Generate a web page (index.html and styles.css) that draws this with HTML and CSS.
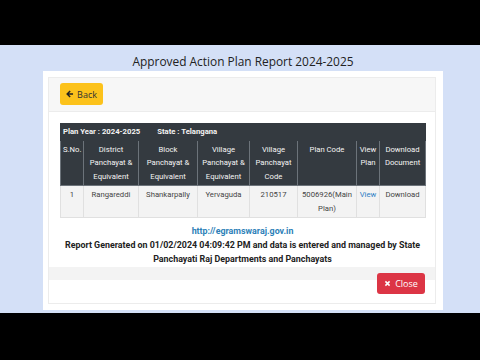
FILE: index.html
```html
<!DOCTYPE html>
<html>
<head>
<meta charset="utf-8">
<link rel="stylesheet" href="styles.css">
</head>
<body>
<div class="bar-top"></div>
<main class="stage">
  <h1 class="title">Approved Action Plan Report 2024-2025</h1>
  <div class="sheet">
    <div class="panel">
      <div class="panel-head">
        <button class="btn btn-back"><svg class="ico" viewBox="0 0 10 10" width="8" height="8"><path d="M5.2 1.3 1.5 5l3.7 3.7M1.8 5h7" fill="none" stroke="#222" stroke-width="1.9"/></svg>Back</button>
      </div>
      <div class="panel-body">
        <table class="grid">
          <colgroup>
            <col style="width:23px"><col style="width:55px"><col style="width:59px"><col style="width:52px"><col style="width:48px"><col style="width:59px"><col style="width:23px"><col style="width:46px">
          </colgroup>
          <thead>
            <tr class="cap"><th colspan="8">Plan Year : 2024-2025<span class="state">State : Telangana</span></th></tr>
            <tr class="cols">
              <th>S.No.</th>
              <th>District Panchayat &amp; Equivalent</th>
              <th>Block Panchayat &amp; Equivalent</th>
              <th>Village Panchayat &amp; Equivalent</th>
              <th>Village Panchayat Code</th>
              <th>Plan Code</th>
              <th>View Plan</th>
              <th>Download Document</th>
            </tr>
          </thead>
          <tbody>
            <tr>
              <td>1</td>
              <td>Rangareddi</td>
              <td>Shankarpally</td>
              <td>Yervaguda</td>
              <td>210517</td>
              <td>5006926(Main Plan)</td>
              <td><a class="lnk">View</a></td>
              <td>Download</td>
            </tr>
          </tbody>
        </table>
        <div class="note">
          <a class="site">http://egramswaraj.gov.in</a>
          <p class="gen">Report Generated on 01/02/2024 04:09:42 PM and data is entered and managed by State Panchayati Raj Departments and Panchayats</p>
        </div>
      </div>
      <div class="panel-foot">
        <button class="btn btn-close"><svg class="ico" viewBox="0 0 10 10" width="7" height="7"><path d="M2 2l6 6M8 2 2 8" fill="none" stroke="#fff" stroke-width="2.2"/></svg>Close</button>
      </div>
    </div>
  </div>
</main>
<div class="bar-bottom"></div>
</body>
</html>
```
FILE: styles.css
```css
html, body {
  margin: 0;
  padding: 0;
  background: #000;
  width: 480px;
  height: 360px;
  overflow: hidden;
}
.bar-top { height: 45px; background: #000; }
.bar-bottom { height: 47px; background: #000; }
.stage {
  height: 268px;
  background: #d4e0f7;
  display: flex;
  flex-direction: column;
  align-items: flex-start;
  box-sizing: border-box;
  padding: 6px 0 0 43px;
}
.title {
  margin: 0;
  width: 400px;
  text-align: center;
  font-family: "Open Sans", sans-serif;
  font-weight: 400;
  font-size: 11.9px;
  line-height: 20px;
  color: #222;
}
.sheet {
  width: 400px;
  height: 239px;
  box-sizing: border-box;
  background: #fff;
  padding: 6px 7px 6px 5px;
}
.panel {
  height: 100%;
  box-sizing: border-box;
  border: 1px solid #ececec;
  display: flex;
  flex-direction: column;
}
.panel-head {
  height: 34px;
  background: #f7f7f7;
  border-bottom: 1px solid #ececec;
  padding: 5px 0 0 11px;
  box-sizing: border-box;
}
.btn {
  border: 0;
  border-radius: 3px;
  display: inline-flex;
  align-items: center;
  gap: 3px;
  font-family: "Open Sans", sans-serif;
  font-size: 9px;
  padding: 0;
  cursor: pointer;
}
.btn-back {
  width: 43px;
  height: 22px;
  justify-content: center;
  background: #fcc21b;
  color: #333;
}
.btn-close {
  width: 48px;
  height: 21px;
  justify-content: center;
  background: #dc3545;
  color: #fff;
  gap: 4px;
}
.panel-body {
  padding: 11px 10px 0 11px;
  flex: 1;
}
.grid {
  width: 365px;
  table-layout: fixed;
  border-collapse: collapse;
  font-family: Roboto, sans-serif;
  font-size: 7.7px;
  line-height: 13.5px;
  color: #444;
}
.grid th {
  background: #343a40;
  color: #f4f4f4;
  font-weight: 400;
  border: 1px solid #6c737a;
  padding: 2px 2px;
  text-align: center;
  vertical-align: top;
}
.grid .cap th {
  text-align: left;
  font-weight: 700;
  padding: 1px 2px;
  border-color: #343a40;
}
.state { margin-left: 17px; }
.grid td {
  background: #f3f3f3;
  border: 1px solid #e0e0e0;
  padding: 2px 2px;
  text-align: center;
  vertical-align: top;
  height: 26px;
}
.lnk { color: #2f80c5; }
.note {
  text-align: center;
  font-family: Roboto, sans-serif;
  font-weight: 700;
  font-size: 8.9px;
  line-height: 14px;
  color: #222;
  padding-top: 6px;
}
.site { color: #2d7fb8; display: block; }
.gen { margin: 0; }
.panel-foot {
  height: 36px;
  box-sizing: border-box;
  background: linear-gradient(#f3f3f3 0, #f3f3f3 13px, #fff 13px);
  display: flex;
  justify-content: flex-end;
  align-items: flex-start;
  padding: 6px 10px 0 0;
}
```
